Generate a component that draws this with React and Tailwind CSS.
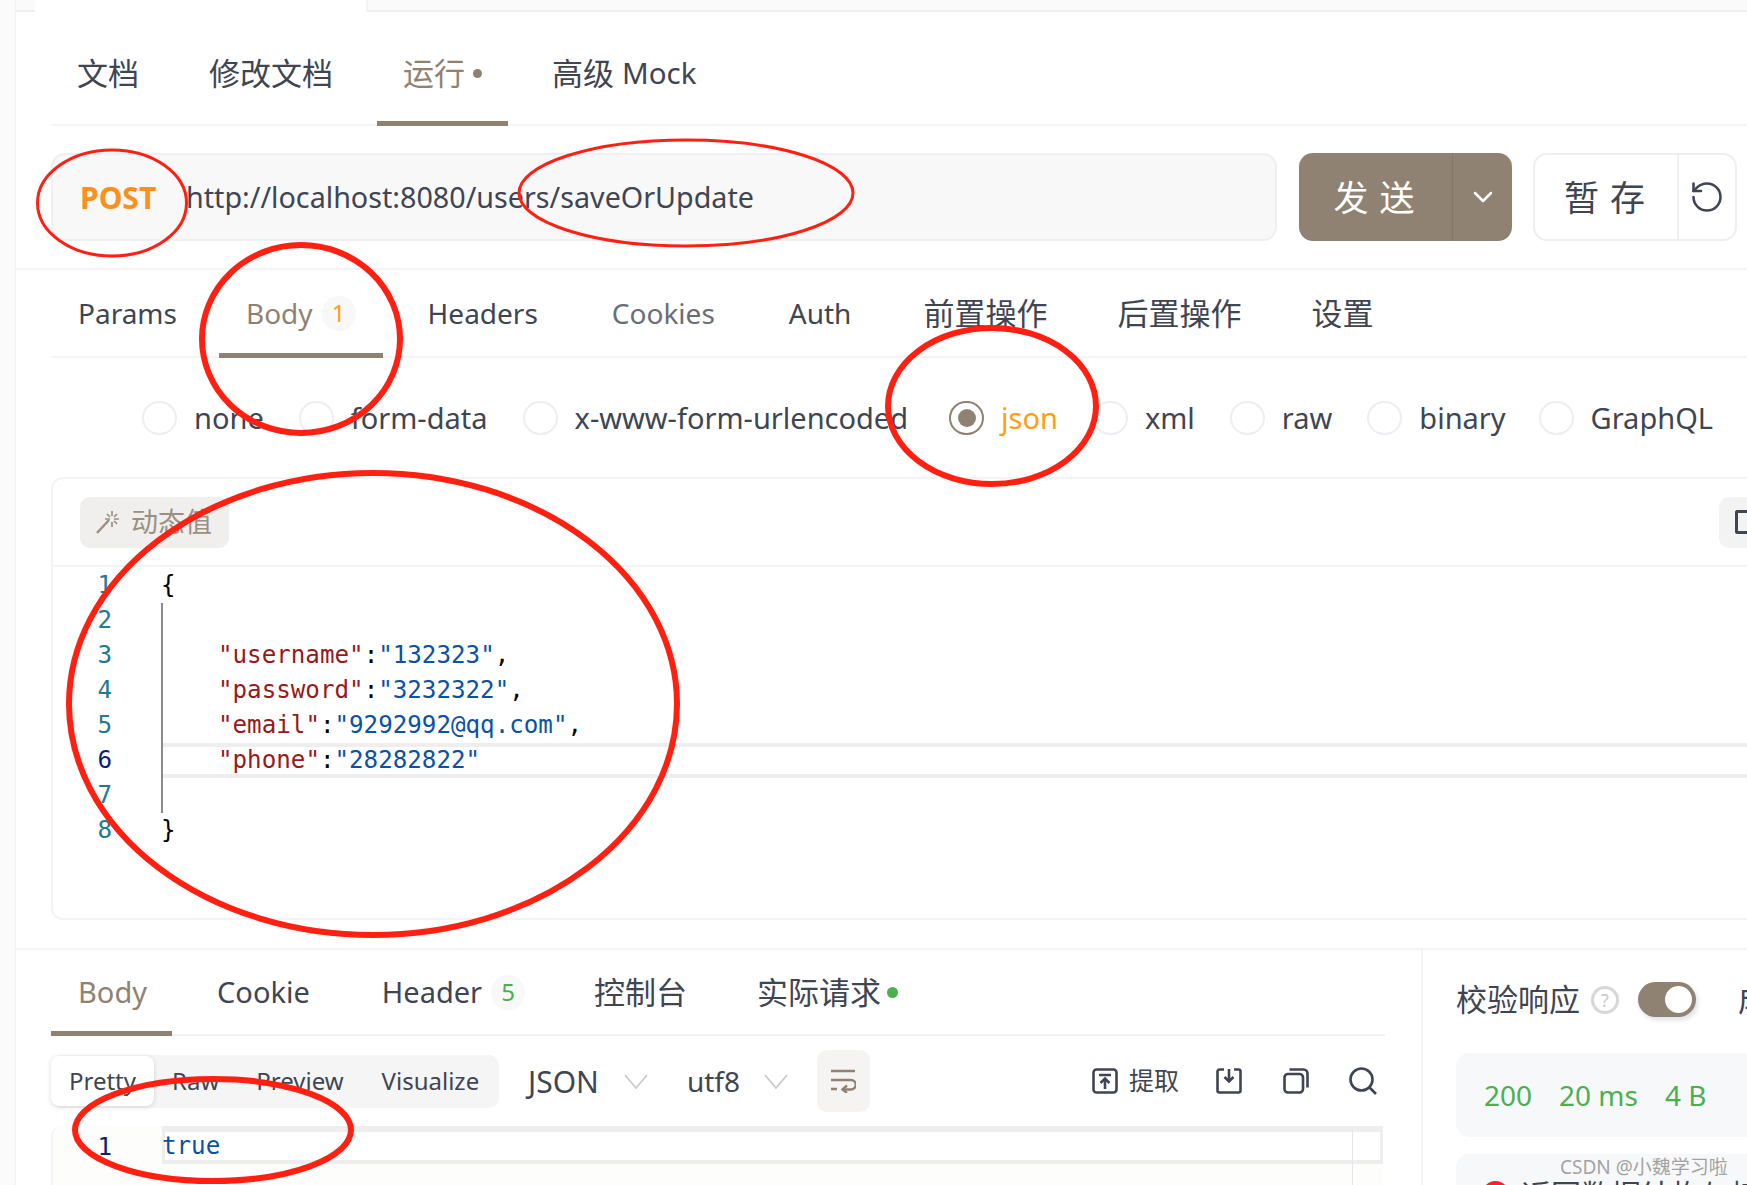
import { ChevronDown, RotateCcw } from 'lucide-react'

// Apifox run panel with the red hand-drawn markup on top.

const ink = 'text-[#404552]'
const dun = 'text-[#8f8272]'
const line = 'border-[#f3f4f6]'

function Tab({ children, active, muted, className = 'px-[27px]' }) {
  const color = active ? dun : muted ? 'text-[#6a6f76]' : ink
  return (
    <div className={`relative flex h-full shrink-0 items-center ${color} ${className}`}>
      {children}
      {active && <span className="absolute inset-x-0 bottom-[-2px] h-[5px] bg-[#8f8272]" />}
    </div>
  )
}

function Badge({ children, className }) {
  return (
    <span
      className={`ml-[9px] flex h-[35px] w-[34px] items-center justify-center rounded-full bg-[#f8f8f8] text-[24px] ${className}`}
    >
      {children}
    </span>
  )
}

function Radio({ label, checked, className = '' }) {
  return (
    <div className={`flex shrink-0 items-center gap-[17px] ${className}`}>
      {checked ? (
        <span className="flex h-[34px] w-[35px] items-center justify-center rounded-full border-2 border-[#8f8272]">
          <span className="h-[18px] w-[18px] rounded-full bg-[#8f8272]" />
        </span>
      ) : (
        <span className="h-[34px] w-[35px] rounded-full border-2 border-[#eceef2]" />
      )}
      <span className={checked ? 'text-[#ff9d14]' : ink}>{label}</span>
    </div>
  )
}

function Key({ k, v, comma }) {
  return (
    <>
      <span className="text-[#97191b]">"{k}"</span>
      <span className="text-black">:</span>
      <span className="text-[#0b51a5]">"{v}"</span>
      {comma && <span className="text-black">,</span>}
    </>
  )
}

function WandIcon() {
  return (
    <svg width="26" height="26" viewBox="0 0 26 26" fill="none" stroke="#9a9082" strokeWidth="2">
      <path d="M2 24 L14 11" strokeWidth="2.4" />
      <path d="M17 2v5M17 13v5M10 10h5M19 10h5M12 5l3 3M22 5l-3 3M22 15l-3-3" strokeWidth="1.7" />
    </svg>
  )
}

function ExtractIcon() {
  return (
    <svg width="26" height="26" viewBox="0 0 26 26" fill="none" stroke="#404552" strokeWidth="2.6">
      <rect x="1.5" y="1.5" width="23" height="23" rx="3" />
      <path d="M7 7h12M13 21V11M8.5 15l4.5-4.5 4.5 4.5" />
    </svg>
  )
}

function SaveIcon() {
  return (
    <svg width="26" height="26" viewBox="0 0 26 26" fill="none" stroke="#404552" strokeWidth="2.6">
      <path d="M8 1.5H3.500a2 2 0 0 0-2 2v19a2 2 0 0 0 2 2h19a2 2 0 0 0 2-2v-19a2 2 0 0 0-2-2H18" />
      <path d="M13 1v12M8.500 9l4.500 4.500L17.500 9" />
    </svg>
  )
}

function CopyIcon() {
  return (
    <svg width="26" height="26" viewBox="0 0 26 26" fill="none" stroke="#404552" strokeWidth="2.6">
      <rect x="1.500" y="6" width="18.500" height="18.500" rx="3.500" />
      <path d="M6.500 1.500h14a4 4 0 0 1 4 4v14" />
    </svg>
  )
}

function SearchIcon() {
  return (
    <svg width="28" height="28" viewBox="0 0 28 28" fill="none" stroke="#404552" strokeWidth="2.6">
      <circle cx="12.500" cy="12.500" r="11" />
      <path d="M20.500 20.500L27 27" />
    </svg>
  )
}

function WrapIcon() {
  return (
    <svg width="26" height="24" viewBox="0 0 26 24" fill="none" stroke="#8f8272" strokeWidth="2.4">
      <path d="M1 2h24M1 11h20a3.500 3.500 0 0 1 0 9.500h-8M1 20h6" />
      <path d="M17 16.500l-4.500 4 4.500 3.500" />
    </svg>
  )
}

function SoftChevron() {
  return (
    <svg width="24" height="15" viewBox="0 0 24 15" fill="none" stroke="#c9cbcf" strokeWidth="1.800">
      <path d="M1 1l11 13L23 1" />
    </svg>
  )
}

function HelpIcon() {
  return (
    <span className="flex h-[28px] w-[28px] items-center justify-center rounded-full border-[3px] border-[#d6d7db] text-[18px] leading-none text-[#c9cace]">
      ?
    </span>
  )
}

function Scribbles() {
  return (
    <svg className="pointer-events-none absolute inset-0" width="1747" height="1185" fill="none" stroke="#ff2012">
      <ellipse cx="112" cy="203" rx="74.500" ry="53" strokeWidth="3" />
      <ellipse cx="686" cy="193" rx="167" ry="53" strokeWidth="3" />
      <ellipse cx="301" cy="339" rx="99" ry="94" strokeWidth="6" />
      <ellipse cx="992" cy="406" rx="104" ry="78" strokeWidth="6" />
      <ellipse cx="373" cy="704" rx="304" ry="231" strokeWidth="6" />
      <ellipse cx="213" cy="1130" rx="138" ry="51" strokeWidth="6" />
    </svg>
  )
}

const numColor = 'text-[#237893]'
const mono = "font-['DejaVu_Sans_Mono',monospace] text-[24.200px]"

export default function App() {
  return (
    <div className="relative flex h-[1185px] w-[1747px] overflow-hidden bg-white font-['Noto_Sans','Noto_Sans_CJK_SC',sans-serif] text-[28px]">
      <div className="w-[16px] shrink-0 border-r border-[#f1f2f4] bg-[#fbfbfc]" />

      <div className="flex min-w-0 flex-1 flex-col">
        {/* tab strip cut off at the top */}
        <div className="flex h-[12px] shrink-0">
          <div className="w-[19px] border-b-2 border-[#eeeff3] bg-[#fafafa]" />
          <div className="w-[333px] border-r-2 border-[#f3f3f5]" />
          <div className="flex-1 border-b-2 border-[#eeeff3] bg-[#fafafa]" />
        </div>

        <div className="pl-[35px]">
          <div className={`flex h-[114px] gap-[18px] border-b-2 ${line} pt-[10px] text-[31px]`}>
            <Tab className="px-[26px]">文档</Tab>
            <Tab className="px-[26px]">修改文档</Tab>
            <Tab active className="px-[26px]">
              运行<span className="ml-[8px] h-[9px] w-[9px] rounded-full bg-[#8f8272]" />
            </Tab>
            <Tab className="px-[26px]">
              高级<span className="ml-[8px] text-[29.500px]">Mock</span>
            </Tab>
          </div>

          <div className="flex h-[142px] items-start gap-[22px] pt-[27px]">
            <div className="flex h-[88px] w-[1226px] shrink-0 items-center rounded-[14px] border-2 border-[#eeeff3] bg-[#f8f8f9]">
              <span className="w-[133px] shrink-0 pl-[27px] text-[30px] font-bold text-[#ff8f1c]">POST</span>
              <span className="text-[28.700px] text-[#404552]">http://localhost:8080/users/saveOrUpdate</span>
            </div>
            <div className="flex h-[88px] w-[213px] shrink-0 items-stretch overflow-hidden rounded-[14px] bg-[#8f8272] text-white">
              <div className="flex w-[153px] items-center justify-center pt-[3px] pl-[8px] text-[35px] tracking-[11px]">
                发送
              </div>
              <div className="flex flex-1 items-center justify-center border-l border-[#857868]">
                <ChevronDown size={32} strokeWidth={1.9} />
              </div>
            </div>
            <div className={`-ml-[1px] flex h-[88px] w-[204px] shrink-0 items-stretch rounded-[14px] border-2 border-[#eeeff3] ${ink}`}>
              <div className="flex w-[142px] items-center justify-center pt-[3px] pl-[8px] text-[35px] tracking-[11px]">
                暂存
              </div>
              <div className="flex flex-1 items-center justify-center border-l-2 border-[#eeeff3]">
                <RotateCcw size={36} strokeWidth={1.7} />
              </div>
            </div>
          </div>
        </div>

        <div className={`border-t-2 ${line} pl-[35px]`}>
          <div className={`flex h-[88px] gap-[18px] border-b-2 ${line}`}>
            <Tab className="-mr-[3px] px-[27px]">Params</Tab>
            <Tab active>
              Body<Badge className="text-[#ff9d14]">1</Badge>
            </Tab>
            <Tab>Headers</Tab>
            <Tab muted className="ml-[2px] px-[27px]">
              Cookies
            </Tab>
            <Tab className="ml-[2px] px-[27px]">Auth</Tab>
            <Tab className="-mr-[2px] px-[27px] text-[31px]">前置操作</Tab>
            <Tab className="-mr-[2px] px-[27px] text-[31px]">后置操作</Tab>
            <Tab className="px-[27px] text-[31px]">设置</Tab>
          </div>

          <div className="flex h-[119px] items-center gap-[35px] whitespace-nowrap pl-[91px] text-[29px]">
            <Radio label="none" />
            <Radio label="form-data" />
            <Radio label="x-www-form-urlencoded" />
            <Radio label="json" checked className="ml-[6px]" />
            <Radio label="xml" />
            <Radio label="raw" />
            <Radio label="binary" />
            <Radio label="GraphQL" className="-ml-[2px]" />
            <Radio label="" />
          </div>

          {/* request body editor */}
          <div className={`h-[443px] rounded-l-[12px] border-y-2 border-l-2 ${line}`}>
            <div className={`flex h-[88px] items-center justify-between border-b-2 ${line} pl-[27px]`}>
              <div className="flex h-[51px] w-[149px] items-center gap-[10px] rounded-[10px] bg-[#f0efee] pl-[15px] text-[27px] text-[#9a9082]">
                <WandIcon />
                动态值
              </div>
              <div className="flex h-[51px] w-[28px] items-center rounded-l-[10px] bg-[#f3f3f3] pl-[16px]">
                <span className="h-[24px] w-[12px] rounded-l-[3px] border-y-[3px] border-l-[3px] border-[#404552]" />
              </div>
            </div>
            <div className={`flex pt-[1px] leading-[35px] ${mono}`}>
              <div className="w-[59px] shrink-0 text-right">
                {[1, 2, 3, 4, 5, 6, 7, 8].map((n) => (
                  <div key={n} className={`h-[35px] ${n === 6 ? 'text-[#0b216f]' : numColor}`}>
                    {n}
                  </div>
                ))}
              </div>
              <div className="ml-[49px] min-w-0 flex-1 whitespace-pre">
                <div className="h-[35px] text-black">{'{'}</div>
                <div className="border-l-2 border-[#8b8b8b]">
                  <div className="h-[35px]" />
                  <div className="h-[35px] pl-[55px]">
                    <Key k="username" v="132323" comma />
                  </div>
                  <div className="h-[35px] pl-[55px]">
                    <Key k="password" v="3232322" comma />
                  </div>
                  <div className="h-[35px] pl-[55px]">
                    <Key k="email" v="9292992@qq.com" comma />
                  </div>
                  <div className="flex h-[35px] items-center border-y-4 border-[#eeeeee] pl-[55px]">
                    <span>
                      <Key k="phone" v="28282822" />
                    </span>
                  </div>
                  <div className="h-[35px]" />
                </div>
                <div className="h-[35px] text-black">{'}'}</div>
              </div>
            </div>
          </div>
        </div>

        {/* response */}
        <div className={`mt-[28px] flex min-h-0 flex-1 border-t-2 ${line}`}>
          <div className={`w-[1407px] shrink-0 border-r-2 ${line} pl-[35px]`}>
            <div className="w-[1334px]">
              <div className="flex h-[86px] gap-[18px] border-b-2 border-[#f1f3f7] text-[29px]">
                <Tab active className="pr-[25px] pl-[27px]">
                  Body
                </Tab>
                <Tab>Cookie</Tab>
                <Tab className="-mr-[3px] px-[27px]">
                  Header<Badge className="text-[#4caf50]">5</Badge>
                </Tab>
                <Tab className="-mr-[2px] px-[27px] text-[31px]">控制台</Tab>
                <Tab className="px-[27px] text-[31px]">
                  实际请求<span className="ml-[6px] h-[11px] w-[11px] rounded-full bg-[#4caf50]" />
                </Tab>
              </div>

              <div className={`flex h-[76px] items-center pt-[14px] pr-[8px] ${ink}`}>
                <div className="flex h-[53px] w-[448px] shrink-0 items-center rounded-[10px] bg-[#f5f5f6] text-[24px]">
                  <span className="flex h-[50px] w-[103px] items-center justify-center rounded-[8px] bg-white shadow-[0_1px_5px_rgba(60,60,90,0.18)]">
                    Pretty
                  </span>
                  <span className="ml-[18px]">Raw</span>
                  <span className="ml-[37px]">Preview</span>
                  <span className="ml-[38px]">Visualize</span>
                </div>
                <span className="ml-[29px] text-[30px]">JSON</span>
                <span className="ml-[25px] flex">
                  <SoftChevron />
                </span>
                <span className="ml-[39px]">utf8</span>
                <span className="ml-[24px] flex">
                  <SoftChevron />
                </span>
                <span className="ml-[29px] flex h-[62px] w-[53px] items-center justify-center rounded-[10px] bg-[#f5f4f2]">
                  <WrapIcon />
                </span>
                <div className="ml-auto flex items-center">
                  <ExtractIcon />
                  <span className="ml-[11px] text-[25px]">提取</span>
                  <span className="ml-[37px] flex">
                    <SaveIcon />
                  </span>
                  <span className="ml-[41px] flex">
                    <CopyIcon />
                  </span>
                  <span className="ml-[40px] flex">
                    <SearchIcon />
                  </span>
                </div>
              </div>

              <div className={`relative mt-[14px] flex h-[100px] w-[1332px] rounded-tl-[10px] border-l-2 ${line} bg-[#fdfdfc] ${mono}`}>
                <div className="h-[38px] w-[59px] shrink-0 pt-[3px] text-right leading-[37px] text-[#0b216f]">1</div>
                <div className="ml-[50px] flex h-[38px] flex-1 items-center border-t-[6px] border-r-[3px] border-b-4 border-l-[3px] border-[#eeeeee] bg-white">
                  <span className="-ml-[3px] text-[#0b51a5]">true</span>
                </div>
                <span className="absolute top-[3px] right-[30px] bottom-0 w-px bg-[#e6e6e6]" />
              </div>
            </div>
          </div>

          <div className="min-w-0 flex-1 overflow-hidden pl-[33px]">
            <div className={`flex h-[99px] items-center whitespace-nowrap text-[31px] ${ink}`}>
              校验响应
              <span className="ml-[11px] flex">
                <HelpIcon />
              </span>
              <span className="ml-[19px] flex h-[35px] w-[58px] shrink-0 items-center justify-end rounded-full bg-[#8f8272] pr-[4px] shadow-[2px_3px_5px_rgba(0,0,0,0.12)]">
                <span className="h-[27px] w-[27px] rounded-full bg-white" />
              </span>
              <span className="ml-[42px]">成功</span>
            </div>
            <div className="mt-[4px] flex h-[84px] w-[400px] items-center gap-[27px] rounded-[14px] bg-[#f7f8fa] pl-[28px] text-[#4caf50]">
              <span>200</span>
              <span>20 ms</span>
              <span>4 B</span>
            </div>
            <div className={`mt-[17px] flex h-[100px] w-[400px] gap-[12px] rounded-[14px] bg-[#f7f8fa] pt-[24px] pl-[26px] text-[30px] leading-[34px] whitespace-nowrap ${ink}`}>
              <span className="mt-[3px] h-[27px] w-[27px] shrink-0 rounded-full bg-[#f5222d]" />
              返回数据结构与接口定义一致
            </div>
          </div>
        </div>
      </div>

      <span className="absolute top-[1153px] left-[1560px] text-[19px] whitespace-nowrap text-[#a3a3a3]">
        CSDN @小魏学习啦
      </span>

      <Scribbles />
    </div>
  )
}
